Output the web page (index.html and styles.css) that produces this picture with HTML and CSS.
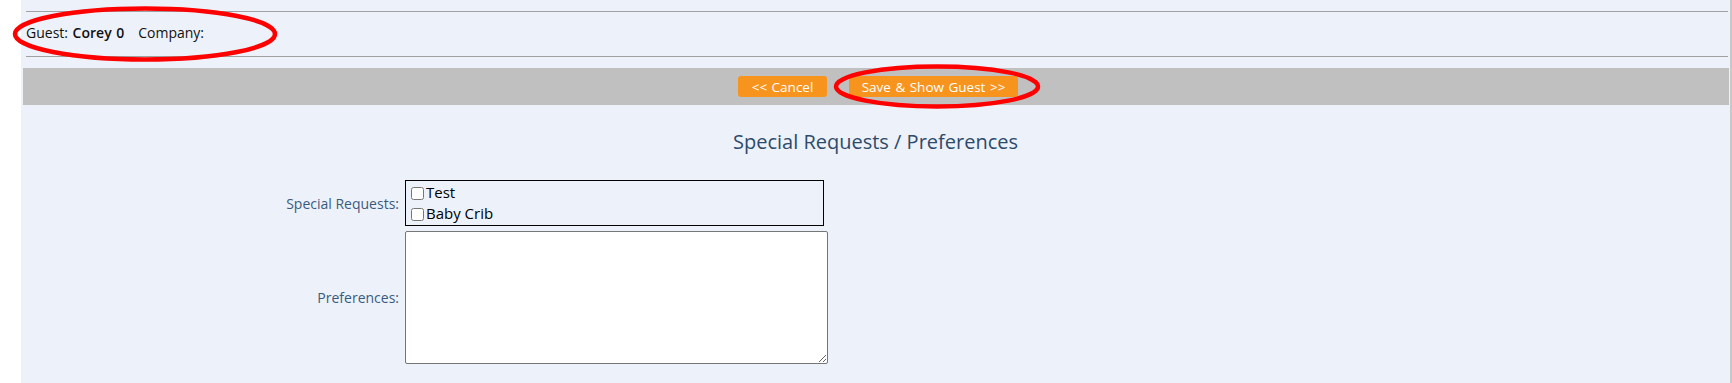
FILE: index.html
```html
<!DOCTYPE html>
<html lang="en">
<head>
    <meta charset="UTF-8">
    <title>Special Requests / Preferences</title>
    <link rel="stylesheet" href="styles.css">
</head>
<body>
    <div class="page">
        <hr class="rule first">
        <div class="guest-info">Guest: <b>Corey 0</b>&nbsp;&nbsp; Company:</div>
        <hr class="rule">
        <div class="action-bar">
            <button class="btn btn-cancel">&lt;&lt; Cancel</button>
            <button class="btn btn-save">Save &amp; Show Guest &gt;&gt;</button>
        </div>
        <h3 class="section-title">Special Requests / Preferences</h3>
        <div class="form-grid">
            <span class="field-label">Special Requests:</span>
            <div class="check-list">
                <label><input type="checkbox">Test</label>
                <label><input type="checkbox">Baby Crib</label>
            </div>
            <label class="field-label" for="prefs">Preferences:</label>
            <textarea id="prefs"></textarea>
        </div>
    </div>

    <!-- red annotation marks drawn over the screenshot -->
    <svg class="marks" width="1732" height="383" viewBox="0 0 1732 383">
        <ellipse cx="145" cy="34" rx="130" ry="25.5" />
        <ellipse cx="937" cy="86.5" rx="101" ry="20" />
    </svg>
</body>
</html>
```

FILE: styles.css
```css
body {
    margin: 0;
    background: #ffffff;
    font-family: "Open Sans", "Liberation Sans", sans-serif;
    position: relative;
}
.page {
    margin-left: 21px;
    width: 1709px;
    min-height: 383px;
    background: #edf2fa;
    border-right: 2px solid #c8c8c8;
    overflow: hidden;
}
.rule {
    margin: 0 2px 0 5px;
    border: 0;
    border-top: 1px solid #a0a0a0;
}
.rule.first {
    margin-top: 11px;
}
.guest-info {
    height: 44px;
    line-height: 42px;
    padding-left: 5px;
    font-size: 14px;
    color: #111;
    word-spacing: 1px;
}
.guest-info b {
    font-weight: 600;
}
.action-bar {
    margin: 11px 1px 0 2px;
    height: 37px;
    background: #c0c0c0;
    display: flex;
    justify-content: center;
    align-items: center;
    gap: 22px;
    padding-left: 4px;
}
.btn {
    height: 21px;
    padding: 0;
    background: #f7941d;
    color: #fff;
    border: none;
    border-radius: 3px;
    font-family: inherit;
    font-size: 13.5px;
    word-spacing: 1px;
}
.btn-cancel {
    width: 89px;
}
.btn-save {
    width: 169px;
}
.section-title {
    margin: 24px 0 0;
    font-size: 20px;
    line-height: 26px;
    font-weight: normal;
    color: #2e4a6b;
    text-align: center;
}
.form-grid {
    margin-top: 25px;
    display: grid;
    grid-template-columns: 378px 423px;
    column-gap: 6px;
    row-gap: 5px;
}
.field-label {
    align-self: center;
    text-align: right;
    font-size: 14px;
    color: #3a5a80;
}
.check-list {
    width: 419px;
    box-sizing: border-box;
    border: 1px solid #000;
    padding: 1px 0;
}
.check-list label {
    display: block;
    line-height: 21px;
    font-size: 15px;
    color: #000;
}
.check-list input {
    margin: 0 2px 0 5px;
    vertical-align: -2px;
}
textarea {
    display: block;
    width: 423px;
    height: 133px;
    box-sizing: border-box;
    margin: 0;
    border: 1px solid #767676;
    border-radius: 2px;
    background: #fff;
}
.marks {
    position: absolute;
    top: 0;
    left: 0;
    pointer-events: none;
}
.marks ellipse {
    fill: none;
    stroke: #f00;
    stroke-width: 4.5;
}
```
